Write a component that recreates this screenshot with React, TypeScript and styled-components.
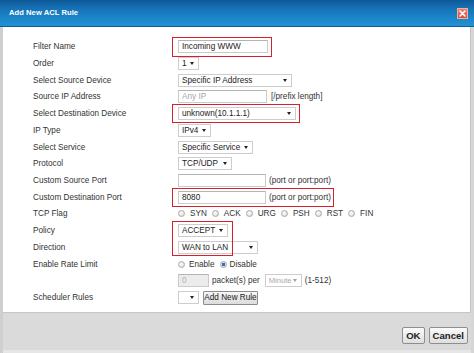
import styled, { createGlobalStyle } from 'styled-components';

const GlobalStyle = createGlobalStyle`
  html, body {
    margin: 0;
    padding: 0;
    background: #ffffff;
  }
  body {
    font-family: "Liberation Sans", Arial, sans-serif;
  }
`;

const Dialog = styled.div`
  width: 474px;
  height: 353px;
  display: flex;
  flex-direction: column;
  overflow: hidden;
  background: #d9d9d9;
`;

const TitleBar = styled.div`
  height: 27px;
  box-sizing: border-box;
  display: flex;
  align-items: center;
  justify-content: space-between;
  padding: 0 6px 1px 9px;
  background: linear-gradient(#0f5898 0%, #1674b8 35%, #1b86c9 70%, #2391d3 100%);
  border-bottom: 1px solid #0f5e98;
`;

const Title = styled.span`
  color: #ffffff;
  font-weight: bold;
  font-size: 7.6px;
  letter-spacing: 0.05px;
`;

const CloseButton = styled.span`
  width: 11px;
  height: 11px;
  box-sizing: border-box;
  display: grid;
  place-items: center;
  margin-top: 1px;
  background: linear-gradient(#e8826e, #d4503f);
  border: 1px solid #f0b0a0;
`;

const Frame = styled.div`
  flex: 1;
  display: flex;
  flex-direction: column;
  border-left: 3px solid #cfcfcf;
  border-right: 3px solid #d6d6d6;
`;

const Body = styled.div`
  height: 285px;
  box-sizing: border-box;
  background: #ffffff;
  padding: 11.4px 0 0 30px;
  border-right: 1px solid #c4c4c4;
`;

const Form = styled.div`
  display: grid;
  grid-template-columns: 145px 1fr;
  grid-auto-rows: 16.73px;
  align-items: center;
`;

const Label = styled.span`
  font-size: 8.2px;
  color: #333333;
  white-space: nowrap;
`;

const Cell = styled.div`
  display: flex;
  align-items: center;
  font-size: 8.2px;
  color: #333333;
  white-space: nowrap;
`;

const Hint = styled.span<{ $gap?: number }>`
  margin-left: ${(p) => p.$gap ?? 3}px;
  font-size: 8.2px;
  color: #333333;
`;

const Mark = styled.div<{ $t: number; $r: number; $b: number; $l: number }>`
  position: relative;
  display: flex;
  align-items: center;

  &::after {
    content: '';
    position: absolute;
    top: ${(p) => -p.$t}px;
    right: ${(p) => -p.$r}px;
    bottom: ${(p) => -p.$b}px;
    left: ${(p) => -p.$l}px;
    border: 1.7px solid #d8202c;
    pointer-events: none;
  }
`;

const SelectBox = styled.div<{ $w: number; $disabled?: boolean }>`
  width: ${(p) => p.$w}px;
  height: 13px;
  box-sizing: border-box;
  display: flex;
  align-items: center;
  justify-content: space-between;
  padding: 0 4px 0 3px;
  border: 1px solid #cdcdcd;
  background: #ffffff;
  font-size: ${(p) => (p.$disabled ? 7.6 : 8.2)}px;
  color: ${(p) => (p.$disabled ? '#a8a8a8' : '#222222')};
`;

const Arrow = styled.span<{ $disabled?: boolean }>`
  width: 0;
  height: 0;
  border-left: 2.5px solid transparent;
  border-right: 2.5px solid transparent;
  border-top: 3px solid ${(p) => (p.$disabled ? '#a0a0a0' : '#222222')};
  flex: none;
`;

const TextInput = styled.input<{ $w: number }>`
  width: ${(p) => p.$w}px;
  height: 13px;
  box-sizing: border-box;
  margin: 0;
  padding: 0 3px;
  border: 1px solid #cbcbcb;
  border-top-color: #b4b4b4;
  background: #ffffff;
  font-family: "Liberation Sans", Arial, sans-serif;
  font-size: 8.2px;
  color: #222222;
  outline: none;

  &::placeholder {
    color: #a5a5a5;
  }

  &:disabled {
    background: #ececec;
    color: #b0b0b0;
  }
`;

const RadioGroup = styled.div`
  display: flex;
  align-items: center;
`;

const RadioItem = styled.span<{ $gap?: number }>`
  display: flex;
  align-items: center;
  gap: ${(p) => p.$gap ?? 5}px;
  margin-right: 5px;
  font-size: 8.2px;
  color: #333333;
`;

const RadioDot = styled.span<{ $checked?: boolean }>`
  width: 7px;
  height: 7px;
  box-sizing: border-box;
  border-radius: 50%;
  border: 1px solid #a9a9a9;
  background: ${(p) =>
    p.$checked
      ? 'radial-gradient(circle, #2f6fc0 0 1.6px, #d6e4f4 2px)'
      : 'radial-gradient(circle at 40% 35%, #ffffff, #d4d4d4)'};
`;

const SmallButton = styled.button`
  height: 14px;
  margin: 0 0 0 4px;
  padding: 0;
  width: 55px;
  box-sizing: border-box;
  border: 1px solid #8c8c8c;
  border-radius: 1px;
  background: linear-gradient(#f6f6f6, #dcdcdc);
  font-family: "Liberation Sans", Arial, sans-serif;
  font-size: 8.2px;
  color: #1a1a1a;
`;

const Footer = styled.div`
  flex: 1;
  display: flex;
  justify-content: flex-end;
  align-items: flex-start;
  gap: 4px;
  padding: 14px 3px 0 0;
  background: #dadada;
  border-top: 1px solid #c6c6c6;
  border-bottom: 3px solid #e6e6e6;
`;

const DialogButton = styled.button`
  height: 17px;
  box-sizing: border-box;
  margin: 0;
  padding: 0 3px;
  border: 1px solid #8e8e8e;
  border-radius: 2px;
  background: linear-gradient(#fbfbfb, #dedede);
  font-family: "Liberation Sans", Arial, sans-serif;
  font-weight: bold;
  font-size: 9.6px;
  color: #222222;
`;

const Select = ({ w, children, disabled }: { w: number; children?: string; disabled?: boolean }) => (
  <SelectBox $w={w} $disabled={disabled}>
    <span>{children}</span>
    <Arrow $disabled={disabled} />
  </SelectBox>
);

const Radio = ({ label, checked, gap }: { label: string; checked?: boolean; gap?: number }) => (
  <RadioItem $gap={gap}>
    <RadioDot $checked={checked} />
    {label}
  </RadioItem>
);

const tcpFlags = ['SYN', 'ACK', 'URG', 'PSH', 'RST', 'FIN'];

export default function App() {
  return (
    <>
      <GlobalStyle />
      <Dialog>
        <TitleBar>
          <Title>Add New ACL Rule</Title>
          <CloseButton>
            <svg width="7" height="7" viewBox="0 0 7 7">
              <path d="M1 1 L6 6 M6 1 L1 6" stroke="#ffffff" strokeWidth="1.5" strokeLinecap="round" />
            </svg>
          </CloseButton>
        </TitleBar>
        <Frame>
          <Body>
            <Form>
              <Label>Filter Name</Label>
              <Cell>
                <Mark $t={3} $r={4} $b={4} $l={6}>
                  <TextInput $w={90} readOnly defaultValue="Incoming WWW" />
                </Mark>
              </Cell>

              <Label>Order</Label>
              <Cell>
                <Select w={21}>1</Select>
              </Cell>

              <Label>Select Source Device</Label>
              <Cell>
                <Select w={114}>Specific IP Address</Select>
              </Cell>

              <Label>Source IP Address</Label>
              <Cell>
                <TextInput $w={89} readOnly placeholder="Any IP" />
                <Hint $gap={4}>[/prefix length]</Hint>
              </Cell>

              <Label>Select Destination Device</Label>
              <Cell>
                <Mark $t={3} $r={4} $b={3} $l={6}>
                  <Select w={118}>unknown(10.1.1.1)</Select>
                </Mark>
              </Cell>

              <Label>IP Type</Label>
              <Cell>
                <Select w={33}>IPv4</Select>
              </Cell>

              <Label>Select Service</Label>
              <Cell>
                <Select w={75}>Specific Service</Select>
              </Cell>

              <Label>Protocol</Label>
              <Cell>
                <Select w={54}>TCP/UDP</Select>
              </Cell>

              <Label>Custom Source Port</Label>
              <Cell>
                <TextInput $w={88} readOnly />
                <Hint>(port or port:port)</Hint>
              </Cell>

              <Label>Custom Destination Port</Label>
              <Cell>
                <Mark $t={3} $r={3} $b={3} $l={6}>
                  <TextInput $w={88} readOnly defaultValue="8080" />
                  <Hint>(port or port:port)</Hint>
                </Mark>
              </Cell>

              <Label>TCP Flag</Label>
              <Cell>
                <RadioGroup>
                  {tcpFlags.map((f) => (
                    <Radio key={f} label={f} />
                  ))}
                </RadioGroup>
              </Cell>

              <Label>Policy</Label>
              <Cell>
                <Mark $t={3} $r={5} $b={19} $l={6}>
                  <Select w={50}>ACCEPT</Select>
                </Mark>
              </Cell>

              <Label>Direction</Label>
              <Cell>
                <Select w={80}>WAN to LAN</Select>
              </Cell>

              <Label>Enable Rate Limit</Label>
              <Cell>
                <RadioGroup>
                  <Radio label="Enable" gap={4} />
                  <Radio label="Disable" gap={3} checked />
                </RadioGroup>
              </Cell>

              <Label />
              <Cell>
                <TextInput $w={31} disabled defaultValue="0" />
                <Hint>packet(s) per</Hint>
                <Hint $gap={5}>
                  <Select w={37} disabled>
                    Minute
                  </Select>
                </Hint>
                <Hint $gap={3}>(1-512)</Hint>
              </Cell>

              <Label>Scheduler Rules</Label>
              <Cell>
                <Select w={21} />
                <SmallButton>Add New Rule</SmallButton>
              </Cell>
            </Form>
          </Body>
          <Footer>
            <DialogButton>OK</DialogButton>
            <DialogButton>Cancel</DialogButton>
          </Footer>
        </Frame>
      </Dialog>
    </>
  );
}
